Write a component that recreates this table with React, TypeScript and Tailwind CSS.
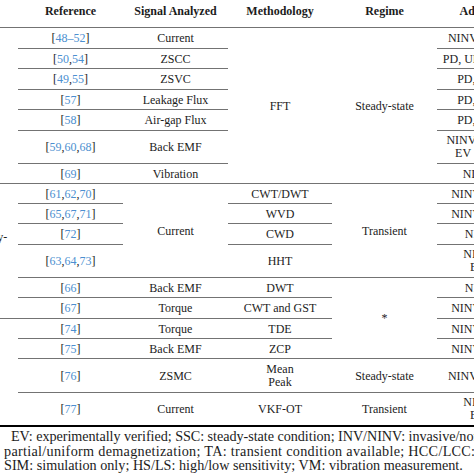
import type { ReactNode } from "react";
import clsx from "clsx";

const rule = "border-b border-[#737373]";

function Cell({ children, className }: { children?: ReactNode; className?: string }) {
  return (
    <div className={clsx("flex flex-col items-center justify-center text-center whitespace-nowrap", className)}>
      {children}
    </div>
  );
}

function Ref({ nums }: { nums: string[] }) {
  return (
    <span>
      [
      {nums.map((n, i) => (
        <span key={n}>
          {i > 0 && ","}
          <span className="text-[#4c8fd0]">{n}</span>
        </span>
      ))}
      ]
    </span>
  );
}

export default function App() {
  return (
    <div className="w-[474px] h-[474px] overflow-hidden bg-white text-[#1c1c1c] font-['Liberation_Serif',serif]">
      <div className="-ml-[87px] w-[629px] grid grid-cols-[105px_105px_105px_104px_105px_105px] grid-rows-[28px_21px_20px_21px_20px_21px_33px_20px_20px_20px_21px_33px_20px_21px_20px_20px_34px_32px] text-[12px] leading-[14px]">
        {/* header */}
        <Cell className={clsx(rule, "font-bold pb-[5px]")}>Category</Cell>
        <Cell className={clsx(rule, "font-bold pb-[5px]")}>Reference</Cell>
        <Cell className={clsx(rule, "font-bold pb-[5px]")}>Signal Analyzed</Cell>
        <Cell className={clsx(rule, "font-bold pb-[5px]")}>Methodology</Cell>
        <Cell className={clsx(rule, "font-bold pb-[5px]")}>Regime</Cell>
        <Cell className={clsx(rule, "font-bold pb-[5px]")}>Advantages</Cell>

        {/* frequency domain */}
        <Cell className={clsx(rule, "row-span-7")}>
          Frequency-
          <br />
          Domain
          <br />
          Analysis
        </Cell>
        <Cell className={rule}><Ref nums={["48–52"]} /></Cell>
        <Cell className={rule}>Current</Cell>
        <Cell className={clsx(rule, "row-span-7")}>FFT</Cell>
        <Cell className={clsx(rule, "row-span-7")}>Steady-state</Cell>
        <Cell className={rule}>NINV, SSC, SIM</Cell>

        <Cell className={rule}><Ref nums={["50", "54"]} /></Cell>
        <Cell className={rule}>ZSCC</Cell>
        <Cell className={rule}>PD, UD, SSC, SIM</Cell>

        <Cell className={rule}><Ref nums={["49", "55"]} /></Cell>
        <Cell className={rule}>ZSVC</Cell>
        <Cell className={rule}>PD, SSC, EV</Cell>

        <Cell className={rule}><Ref nums={["57"]} /></Cell>
        <Cell className={rule}>Leakage Flux</Cell>
        <Cell className={rule}>PD, SSC, EV</Cell>

        <Cell className={rule}><Ref nums={["58"]} /></Cell>
        <Cell className={rule}>Air-gap Flux</Cell>
        <Cell className={rule}>PD, SSC, EV</Cell>

        <Cell className={rule}><Ref nums={["59", "60", "68"]} /></Cell>
        <Cell className={rule}>Back EMF</Cell>
        <Cell className={clsx(rule, "leading-[13px]")}>
          <span>NINV, SSC, SIM,</span>
          <span>
            EV <Ref nums={["59", "60", "68"]} />
          </span>
        </Cell>

        <Cell className={rule}><Ref nums={["69"]} /></Cell>
        <Cell className={rule}>Vibration</Cell>
        <Cell className={rule}>NINV, VM</Cell>

        {/* time-frequency domain */}
        <Cell className={clsx(rule, "row-span-6")}>
          Time-Frequency-
          <br />
          Domain
          <br />
          Analysis
        </Cell>
        <Cell className={rule}><Ref nums={["61", "62", "70"]} /></Cell>
        <Cell className={clsx(rule, "row-span-4")}>Current</Cell>
        <Cell className={rule}>CWT/DWT</Cell>
        <Cell className={clsx(rule, "row-span-4")}>Transient</Cell>
        <Cell className={rule}>NINV, TA, SIM</Cell>

        <Cell className={rule}><Ref nums={["65", "67", "71"]} /></Cell>
        <Cell className={rule}>WVD</Cell>
        <Cell className={rule}>NINV, TA, SIM</Cell>

        <Cell className={rule}><Ref nums={["72"]} /></Cell>
        <Cell className={rule}>CWD</Cell>
        <Cell className={rule}>NINV, TA</Cell>

        <Cell className={rule}><Ref nums={["63", "64", "73"]} /></Cell>
        <Cell className={rule}>HHT</Cell>
        <Cell className={clsx(rule, "leading-[13px]")}>
          <span>NINV, TA,</span>
          <span>
            EV <Ref nums={["64"]} />
          </span>
        </Cell>

        <Cell className={rule}><Ref nums={["66"]} /></Cell>
        <Cell className={rule}>Back EMF</Cell>
        <Cell className={rule}>DWT</Cell>
        <Cell className={clsx(rule, "row-span-4")}>*</Cell>
        <Cell className={rule}>NINV, TA</Cell>

        <Cell className={rule}><Ref nums={["67"]} /></Cell>
        <Cell className={rule}>Torque</Cell>
        <Cell className={rule}>CWT and GST</Cell>
        <Cell className={rule}>NINV, TA, SIM</Cell>

        {/* time domain / others */}
        <Cell className="row-span-4">
          Time-
          <br />
          Domain
          <br />
          Analysis
        </Cell>
        <Cell className={rule}><Ref nums={["74"]} /></Cell>
        <Cell className={rule}>Torque</Cell>
        <Cell className={rule}>TDE</Cell>
        <Cell className={rule}>NINV, TA, SIM</Cell>

        <Cell className={rule}><Ref nums={["75"]} /></Cell>
        <Cell className={rule}>Back EMF</Cell>
        <Cell className={rule}>ZCP</Cell>
        <Cell className={rule}>NINV, TA, SIM</Cell>

        <Cell className={rule}><Ref nums={["76"]} /></Cell>
        <Cell className={rule}>ZSMC</Cell>
        <Cell className={clsx(rule, "leading-[13px]")}>
          <span>Mean</span>
          <span>Peak</span>
        </Cell>
        <Cell className={rule}>Steady-state</Cell>
        <Cell className={rule}>NINV, SSC, SIM</Cell>

        <Cell><Ref nums={["77"]} /></Cell>
        <Cell>Current</Cell>
        <Cell>VKF-OT</Cell>
        <Cell>Transient</Cell>
        <Cell className="leading-[13px]">
          <span>NINV, TA,</span>
          <span>
            EV <Ref nums={["77"]} />
          </span>
        </Cell>
      </div>

      <div className="h-[2px] bg-black" />

      <div className="pt-[2px] text-[14.2px] leading-[14.6px] whitespace-nowrap">
        <p className="pl-[11px] tracking-[-0.05px]">
          EV: experimentally verified; SSC: steady-state condition; INV/NINV: invasive/non-invasive;
        </p>
        <p className="pl-[4px] tracking-[0.3px]">
          partial/uniform demagnetization; TA: transient condition available; HCC/LCC: high/low computational cost;
        </p>
        <p className="pl-[4px]">SIM: simulation only; HS/LS: high/low sensitivity; VM: vibration measurement.</p>
      </div>
    </div>
  );
}
